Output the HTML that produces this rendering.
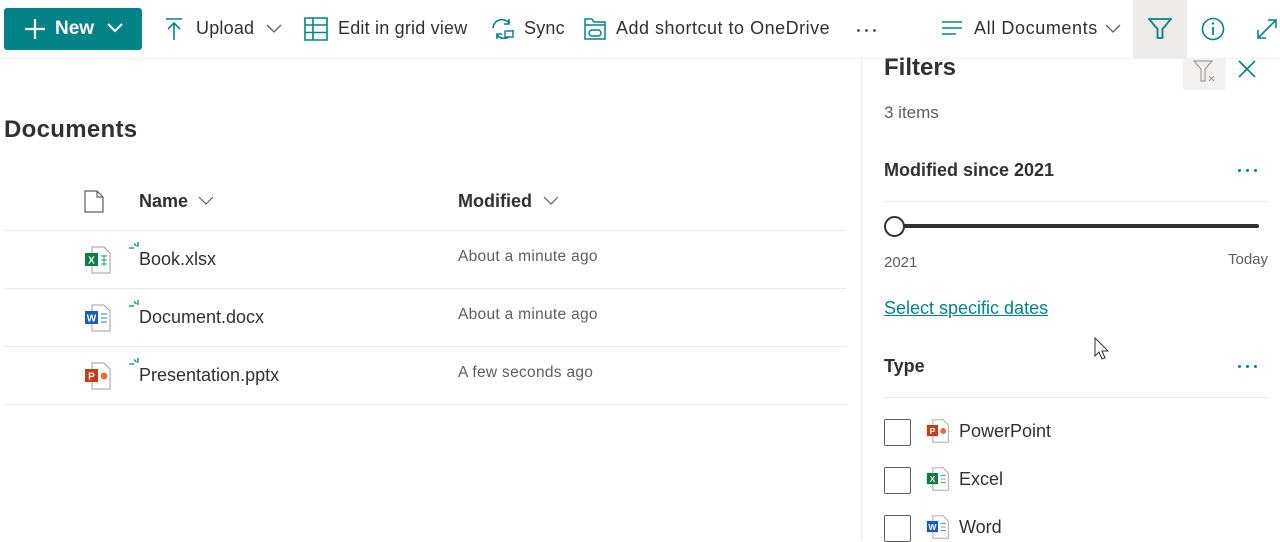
<!DOCTYPE html>
<html><head><meta charset="utf-8"><style>
*{margin:0;padding:0;box-sizing:border-box}
body{width:1280px;height:540px;overflow:hidden;background:#fff;font-family:"Liberation Sans",sans-serif;color:#323130;position:relative}
.a{position:absolute;white-space:nowrap}
.tb{font-size:18px;color:#323130;letter-spacing:0.2px}
.line{position:absolute;height:1px;background:#edebe9}
.cb{position:absolute;left:884px;width:27px;height:27px;border:1px solid #605e5c;border-radius:2px}
.lbl{font-size:18px;color:#323130}
.t{color:#038387}
.dots{position:absolute;width:20px;height:4px}
.dots i{position:absolute;top:0;width:3px;height:3px;border-radius:50%}
</style></head><body>
<!-- toolbar -->
<div class="a" style="left:4px;top:8px;width:138px;height:42px;background:#038387;border-radius:3px;color:#fff;font-size:19px;font-weight:bold">
<svg class="a" style="left:20px;top:10px" width="22" height="22" viewBox="0 0 22 22"><path d="M11 1v20M1 11h20" stroke="#fff" stroke-width="2.2"/></svg>
<span class="a" style="left:51px;top:10px">New</span>
<svg class="a" style="left:102px;top:14px" width="18" height="12" viewBox="0 0 18 12"><path d="M2 2l7 7 7-7" stroke="#fff" stroke-width="2" fill="none"/></svg>
</div>
<svg class="a" style="left:164px;top:17px" width="20" height="24" viewBox="0 0 20 24"><path d="M2 2h16M10 6v17M4 12l6-6 6 6" stroke="#038387" stroke-width="1.6" fill="none"/></svg>
<span class="a tb" style="left:196px;top:18px">Upload</span>
<svg class="a" style="left:265px;top:23px" width="18" height="11" viewBox="0 0 18 11"><path d="M2 2l7 7 7-7" stroke="#605e5c" stroke-width="1.3" fill="none"/></svg>
<svg class="a" style="left:304px;top:17px" width="24" height="24" viewBox="0 0 24 24"><path d="M1 1h22v22H1zM1 8h22M1 15.5h22M9 1v22" stroke="#038387" stroke-width="1.6" fill="none"/></svg>
<span class="a tb" style="left:338px;top:18px">Edit in grid view</span>
<svg class="a" style="left:490px;top:17px" width="26" height="24" viewBox="0 0 26 24"><path d="M3 11a9 9 0 0 1 16-5M19 2v5h-5M23 13a9 9 0 0 1-16 5M7 22v-5h5" stroke="#038387" stroke-width="1.6" fill="none"/><rect x="15" y="14" width="8" height="6" stroke="#038387" stroke-width="1.4" fill="#fff"/></svg>
<span class="a tb" style="left:524px;top:18px">Sync</span>
<svg class="a" style="left:583px;top:16px" width="24" height="26" viewBox="0 0 24 26"><path d="M2 3h7l2 3h11v17H2z M2 9h20" stroke="#038387" stroke-width="1.5" fill="none"/><rect x="6" y="14" width="12" height="6" rx="3" stroke="#038387" stroke-width="1.5" fill="#fff"/></svg>
<span class="a tb" style="left:616px;top:18px;letter-spacing:0.5px">Add shortcut to OneDrive</span>
<div class="dots" style="left:857px;top:29px"><i style="left:0;background:#605e5c"></i><i style="left:8px;background:#605e5c"></i><i style="left:16px;background:#605e5c"></i></div>
<svg class="a" style="left:941px;top:20px" width="22" height="16" viewBox="0 0 22 16"><path d="M1 2h20M1 8h20M1 14h14" stroke="#038387" stroke-width="1.6"/></svg>
<span class="a tb" style="left:974px;top:18px;letter-spacing:0.6px">All Documents</span>
<svg class="a" style="left:1104px;top:23px" width="18" height="11" viewBox="0 0 18 11"><path d="M2 2l7 7 7-7" stroke="#605e5c" stroke-width="1.3" fill="none"/></svg>
<div class="a" style="left:1133px;top:0;width:54px;height:58px;background:#edebe9"></div>
<svg class="a" style="left:1148px;top:18px" width="24" height="22" viewBox="0 0 24 22"><path d="M1 1h22l-8.5 10v9h-5v-9z" stroke="#038387" stroke-width="1.8" fill="none" stroke-linejoin="round"/></svg>
<svg class="a" style="left:1201px;top:17px" width="24" height="24" viewBox="0 0 24 24"><circle cx="12" cy="12" r="10.5" stroke="#038387" stroke-width="1.6" fill="none"/><path d="M12 10v8" stroke="#038387" stroke-width="1.8"/><circle cx="12" cy="6.5" r="1.2" fill="#038387"/></svg>
<svg class="a" style="left:1256px;top:18px" width="22" height="22" viewBox="0 0 22 22"><path d="M2 20L20 2M12 2h8v8M2 12v8h8" stroke="#038387" stroke-width="1.6" fill="none"/></svg>
<div class="line" style="left:0;top:58px;width:1280px;background:#f3f2f1"></div>

<!-- documents -->
<span class="a" style="left:4px;top:116px;font-size:24px;font-weight:bold;color:#323130;letter-spacing:0.3px">Documents</span>
<svg class="a" style="left:84px;top:190px" width="20" height="23" viewBox="0 0 20 23"><path d="M1 1h12l6 6v15H1z M13 1v6h6" stroke="#605e5c" stroke-width="1.2" fill="none"/></svg>
<span class="a" style="left:139px;top:191px;font-size:18px;font-weight:bold">Name</span>
<svg class="a" style="left:198px;top:196px" width="16" height="10" viewBox="0 0 16 10"><path d="M1 1l7 7 7-7" stroke="#605e5c" stroke-width="1.2" fill="none"/></svg>
<span class="a" style="left:458px;top:191px;font-size:18px;font-weight:bold">Modified</span>
<svg class="a" style="left:543px;top:196px" width="16" height="10" viewBox="0 0 16 10"><path d="M1 1l7 7 7-7" stroke="#605e5c" stroke-width="1.2" fill="none"/></svg>
<div class="line" style="left:4px;top:230px;width:842px"></div>
<div class="line" style="left:4px;top:288px;width:842px"></div>
<div class="line" style="left:4px;top:346px;width:842px"></div>
<div class="line" style="left:4px;top:404px;width:842px"></div>

<!-- rows -->
<svg class="a" style="left:84px;top:246px" width="28" height="28" viewBox="0 0 28 28"><path d="M8 1h12l6 6v20H8z" fill="#fff" stroke="#a19f9d"/><path d="M17 10h6M17 14h6M17 18h6M20 9v11" stroke="#21a366"/><rect x="1" y="7" width="13" height="13" fill="#107c41"/><text x="7.5" y="17.5" font-size="10" font-weight="bold" fill="#fff" text-anchor="middle" font-family="Liberation Sans">X</text></svg>
<svg class="a" style="left:84px;top:304px" width="28" height="28" viewBox="0 0 28 28"><path d="M8 1h12l6 6v20H8z" fill="#fff" stroke="#a19f9d"/><path d="M17 10h6M17 14h6M17 18h6" stroke="#2b7cd3"/><rect x="1" y="7" width="13" height="13" fill="#185abd"/><text x="7.5" y="17.5" font-size="10" font-weight="bold" fill="#fff" text-anchor="middle" font-family="Liberation Sans">W</text></svg>
<svg class="a" style="left:84px;top:362px" width="28" height="28" viewBox="0 0 28 28"><path d="M8 1h12l6 6v20H8z" fill="#fff" stroke="#a19f9d"/><circle cx="20" cy="14" r="3.5" fill="#ed6c47"/><rect x="1" y="7" width="13" height="13" fill="#c43e1c"/><text x="7.5" y="17.5" font-size="10" font-weight="bold" fill="#fff" text-anchor="middle" font-family="Liberation Sans">P</text></svg>
<svg class="a" style="left:128px;top:242px" width="14" height="12" viewBox="0 0 14 12"><path d="M1 6h5M10 0v5M6 1.5l2.5 2.5" stroke="#038387" stroke-width="1.3"/></svg>
<svg class="a" style="left:128px;top:300px" width="14" height="12" viewBox="0 0 14 12"><path d="M1 6h5M10 0v5M6 1.5l2.5 2.5" stroke="#038387" stroke-width="1.3"/></svg>
<svg class="a" style="left:128px;top:358px" width="14" height="12" viewBox="0 0 14 12"><path d="M1 6h5M10 0v5M6 1.5l2.5 2.5" stroke="#038387" stroke-width="1.3"/></svg>
<span class="a" style="left:139px;top:249px;font-size:18px">Book.xlsx</span>
<span class="a" style="left:139px;top:307px;font-size:18px">Document.docx</span>
<span class="a" style="left:139px;top:365px;font-size:18px">Presentation.pptx</span>
<span class="a" style="left:458px;top:248px;font-size:15.5px;color:#605e5c;letter-spacing:0.3px">About a minute ago</span>
<span class="a" style="left:458px;top:306px;font-size:15.5px;color:#605e5c;letter-spacing:0.3px">About a minute ago</span>
<span class="a" style="left:458px;top:364px;font-size:15.5px;color:#605e5c;letter-spacing:0.3px">A few seconds ago</span>

<!-- filter pane -->
<div class="a" style="left:861px;top:59px;width:1px;height:481px;background:#edebe9"></div>
<span class="a" style="left:884px;top:54px;font-size:24px;font-weight:bold">Filters</span>
<div class="a" style="left:1183px;top:58px;width:43px;height:32px;background:#f3f2f1;border-radius:2px"></div>
<svg class="a" style="left:1193px;top:60px" width="24" height="24" viewBox="0 0 24 24"><path d="M1 1h18l-7 8v12h-4V9z" stroke="#a19f9d" stroke-width="1.2" fill="none"/><path d="M16 16l5 5M21 16l-5 5" stroke="#a19f9d" stroke-width="1.2"/></svg>
<svg class="a" style="left:1238px;top:60px" width="18" height="18" viewBox="0 0 18 18"><path d="M1 1l16 16M17 1L1 17" stroke="#038387" stroke-width="1.6"/></svg>
<span class="a" style="left:884px;top:103px;font-size:17px;color:#605e5c">3 items</span>
<span class="a" style="left:884px;top:160px;font-size:18px;font-weight:bold">Modified since 2021</span>
<div class="dots" style="left:1238px;top:169px"><i style="left:0;background:#038387"></i><i style="left:8px;background:#038387"></i><i style="left:16px;background:#038387"></i></div>
<div class="line" style="left:884px;top:201px;width:385px"></div>
<div class="a" style="left:894px;top:224px;width:365px;height:4px;background:#323130;border-radius:2px"></div>
<div class="a" style="left:884px;top:216px;width:21px;height:21px;border:2px solid #323130;border-radius:50%;background:#fff"></div>
<span class="a" style="left:884px;top:254px;font-size:15px;color:#605e5c">2021</span>
<span class="a" style="left:1228px;top:251px;font-size:15px;color:#605e5c">Today</span>
<span class="a t" style="left:884px;top:298px;font-size:18px;text-decoration:underline">Select specific dates</span>
<svg class="a" style="left:1094px;top:337px" width="18" height="24" viewBox="0 0 18 24"><path d="M1 1v18l4-4 3 7 3-1-3-7h6z" fill="#fff" stroke="#323130" stroke-width="1"/></svg>
<span class="a" style="left:884px;top:356px;font-size:18px;font-weight:bold">Type</span>
<div class="dots" style="left:1238px;top:365px"><i style="left:0;background:#038387"></i><i style="left:8px;background:#038387"></i><i style="left:16px;background:#038387"></i></div>
<div class="line" style="left:884px;top:397px;width:385px"></div>
<div class="cb" style="top:419px"></div>
<div class="cb" style="top:467px"></div>
<div class="cb" style="top:515px"></div>
<svg class="a" style="left:926px;top:419px" width="24" height="24" viewBox="0 0 28 28"><path d="M8 1h12l6 6v20H8z" fill="#fff" stroke="#a19f9d"/><circle cx="20" cy="14" r="3.5" fill="#ed6c47"/><rect x="1" y="7" width="13" height="13" fill="#c43e1c"/><text x="7.5" y="17.5" font-size="10" font-weight="bold" fill="#fff" text-anchor="middle" font-family="Liberation Sans">P</text></svg>
<svg class="a" style="left:926px;top:467px" width="24" height="24" viewBox="0 0 28 28"><path d="M8 1h12l6 6v20H8z" fill="#fff" stroke="#a19f9d"/><path d="M17 10h6M17 14h6M17 18h6" stroke="#21a366"/><rect x="1" y="7" width="13" height="13" fill="#107c41"/><text x="7.5" y="17.5" font-size="10" font-weight="bold" fill="#fff" text-anchor="middle" font-family="Liberation Sans">X</text></svg>
<svg class="a" style="left:926px;top:515px" width="24" height="24" viewBox="0 0 28 28"><path d="M8 1h12l6 6v20H8z" fill="#fff" stroke="#a19f9d"/><path d="M17 10h6M17 14h6M17 18h6" stroke="#2b7cd3"/><rect x="1" y="7" width="13" height="13" fill="#185abd"/><text x="7.5" y="17.5" font-size="10" font-weight="bold" fill="#fff" text-anchor="middle" font-family="Liberation Sans">W</text></svg>
<span class="a lbl" style="left:959px;top:421px">PowerPoint</span>
<span class="a lbl" style="left:959px;top:469px">Excel</span>
<span class="a lbl" style="left:959px;top:517px">Word</span>
</body></html>
